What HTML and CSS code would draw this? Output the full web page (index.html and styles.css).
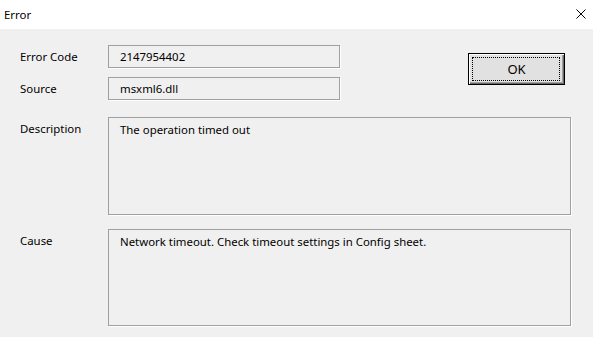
FILE: index.html
```html
<!DOCTYPE html>
<html lang="en">

<head>
    <meta charset="UTF-8">
    <meta name="viewport" content="width=device-width, initial-scale=1.0">
    <link rel="stylesheet" href="styles.css">
    <title>Error</title>
</head>

<body>
    <div class="titlebar">
        <span class="title">Error</span>
        <span class="close">
            <svg width="10" height="10" viewBox="0 0 10 10">
                <path d="M0.5 0.5 L9.5 9.5 M9.5 0.5 L0.5 9.5" stroke="#000" stroke-width="1" fill="none" />
            </svg>
        </span>
    </div>
    <div class="content">
        <div class="top">
            <div class="fields">
                <div class="row">
                    <div class="label">Error Code</div>
                    <div class="field small">2147954402</div>
                </div>
                <div class="row">
                    <div class="label">Source</div>
                    <div class="field small">msxml6.dll</div>
                </div>
            </div>
            <div class="okButton"><span>OK</span></div>
        </div>
        <div class="row desc">
            <div class="label">Description</div>
            <div class="field big">The operation timed out</div>
        </div>
        <div class="row cause">
            <div class="label">Cause</div>
            <div class="field big cause-box">Network timeout. Check timeout settings in Config sheet.</div>
        </div>
    </div>
</body>

</html>
```

FILE: styles.css
```css
body {
    margin: 0;
    width: 593px;
    height: 337px;
    overflow: hidden;
    background-color: #f0f0f0;
    font-family: "Noto Sans", "Open Sans", sans-serif;
    font-size: 11.4px;
    color: #000;
}

.titlebar {
    height: 29px;
    background-color: #fff;
    display: flex;
    align-items: center;
    justify-content: space-between;
    padding: 0 7px 0 4px;
}

.title {
    margin-top: -1px;
}

.close {
    display: flex;
    margin-top: -2px;
}

.content {
    padding: 16px 0 0 20px;
}

.top {
    display: flex;
}

.fields {
    display: flex;
    flex-direction: column;
    gap: 9px;
}

.row {
    display: flex;
}

.label {
    width: 88px;
    line-height: 16px;
}

.row .label {
    align-self: center;
}

.desc .label,
.cause .label {
    align-self: flex-start;
    padding-top: 4px;
}

.field {
    box-sizing: border-box;
    border: 1px solid #a0a0a0;
    box-shadow: 1px 1px 0 #fff;
    padding: 0 0 0 11px;
    line-height: 16px;
}

.small {
    width: 232px;
    height: 23px;
    padding-top: 3px;
}

.big {
    width: 463px;
    height: 98px;
    padding-top: 4px;
}

.desc {
    margin-top: 17px;
}

.cause {
    margin-top: 14px;
}

.cause-box {
    height: 97px;
}

.okButton {
    box-sizing: border-box;
    width: 97px;
    height: 32px;
    margin: 8px 0 0 128px;
    border: 1px solid #000;
    background-color: #e1e1e1;
    box-shadow: inset 1px 1px 0 #fff, inset -1px -1px 0 #696969, inset -2px -2px 0 #a0a0a0;
    position: relative;
    display: flex;
    align-items: center;
    justify-content: center;
}

.okButton::after {
    content: "";
    position: absolute;
    left: 3px;
    top: 3px;
    right: 4px;
    bottom: 3px;
    border: 1px dotted #000;
}

.okButton span {
    font-size: 13px;
    margin-top: -1px;
}
```
